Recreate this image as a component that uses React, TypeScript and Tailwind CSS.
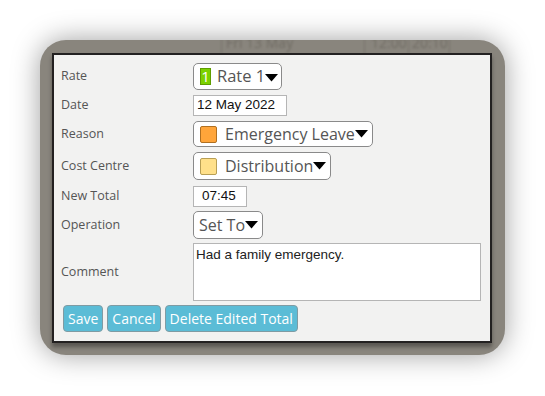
import React from 'react';

const sans = { fontFamily: '"Open Sans", "Noto Sans", sans-serif' };
const arial = { fontFamily: '"Liberation Sans", Arial, sans-serif' };

function Caret() {
  return (
    <svg width="13" height="8" viewBox="0 0 13 8" className="shrink-0">
      <polygon points="0,0 13,0 6.5,7.5" fill="#000" />
    </svg>
  );
}

function Swatch({ color, border }: { color: string; border: string }) {
  return (
    <span
      className="w-[17px] h-[17px] rounded-[2px] border shrink-0"
      style={{ backgroundColor: color, borderColor: border }}
    />
  );
}

function Row({ label, className, children }: { label: string; className: string; children: React.ReactNode }) {
  return (
    <div className={'flex items-center ' + className}>
      <div className="w-[132px] shrink-0 text-[12.5px] text-[#555]">{label}</div>
      {children}
    </div>
  );
}

export default function App() {
  return (
    <div className="w-[545px] h-[396px] bg-white pt-[40px] pl-[40px] overflow-hidden" style={sans}>
      <div className="relative w-[465px] h-[315px] rounded-[26px] bg-[#89857d] pt-[13px] pl-[12px] overflow-hidden shadow-[0_0_28px_rgba(0,0,0,0.38)]">
        {/* faint table behind the dialog */}
        <div className="absolute top-[-8px] left-[181px] flex h-[22px] text-[14px] text-[#716d65] blur-[0.8px]">
          <span className="w-[143px] border-l border-[#7a766e] pl-[4px]">Fri 13 May</span>
          <span className="w-[44px] border-l border-[#7a766e] pl-[6px]">12:00</span>
          <span className="w-[41px] border-l border-[#7a766e] pl-[3px]">20:10</span>
          <span className="border-l border-[#7a766e]" />
        </div>

        <div className="relative w-[440px] h-[290px] bg-[#f2f2f1] border-2 border-[#232121] pt-[8px] pl-[7px] shadow-[0_4px_4px_rgba(0,0,0,0.35)]">
          <Row label="Rate" className="h-[27px]">
            <div className="relative w-[89px] h-[27px] flex items-center gap-[6px] pl-[6px] bg-white border border-[#8a8a8a] rounded-[5px] overflow-hidden">
              <span className="w-[11px] min-w-[11px] h-[17px] bg-[#7cd100] border border-[#5f9d00] text-white text-[15px] leading-[15px] flex items-center justify-center">1</span>
              <span className="text-[16.5px] text-[#555] whitespace-nowrap">Rate 1</span>
              <span className="absolute right-[3px] top-[10px]"><Caret /></span>
            </div>
          </Row>
          <Row label="Date" className="mt-[5px] h-[21px]">
            <div className="w-[94px] h-[21px] bg-white border border-[#b5b5b5] pl-[3px] text-[13.5px] text-[#111] flex items-center" style={arial}>
              12 May 2022
            </div>
          </Row>
          <Row label="Reason" className="mt-[5px] h-[26px]">
            <div className="h-[26px] flex items-center pl-[6px] pr-[4px] bg-white border border-[#8a8a8a] rounded-[5px]">
              <Swatch color="#ffa53a" border="#b07021" />
              <span className="ml-[8px] text-[16px] text-[#555] whitespace-nowrap">Emergency Leave</span>
              <Caret />
            </div>
          </Row>
          <Row label="Cost Centre" className="mt-[5px] h-[28px]">
            <div className="h-[28px] flex items-center pl-[6px] pr-[4px] bg-white border border-[#8a8a8a] rounded-[5px]">
              <Swatch color="#ffe08a" border="#b89f55" />
              <span className="ml-[8px] text-[16px] text-[#555] whitespace-nowrap">Distribution</span>
              <Caret />
            </div>
          </Row>
          <Row label="New Total" className="mt-[6px] h-[21px]">
            <div className="w-[54px] h-[21px] bg-white border border-[#b5b5b5] pl-[8px] text-[13.5px] text-[#111] flex items-center" style={arial}>
              07:45
            </div>
          </Row>
          <Row label="Operation" className="mt-[4px] h-[28px]">
            <div className="h-[28px] flex items-center pl-[5px] pr-[4px] bg-white border border-[#8a8a8a] rounded-[5px]">
              <span className="text-[16px] text-[#555] whitespace-nowrap">Set To</span>
              <Caret />
            </div>
          </Row>
          <Row label="Comment" className="mt-[4px] h-[58px]">
            <div className="w-[288px] h-[58px] bg-white border border-[#b5b5b5] pl-[2px] pt-[1px] text-[13.5px] text-[#222]" style={arial}>
              Had a family emergency.
            </div>
          </Row>
          <div className="mt-[4px] ml-[2px] flex gap-[4px]">
            {['Save', 'Cancel', 'Delete Edited Total'].map((t) => (
              <button
                key={t}
                className="h-[27px] px-[4px] bg-[#5bbcd6] border border-[#7f9ba3] rounded-[4px] text-white text-[14px] leading-none"
                style={sans}
              >
                {t}
              </button>
            ))}
          </div>
        </div>
      </div>
    </div>
  );
}
